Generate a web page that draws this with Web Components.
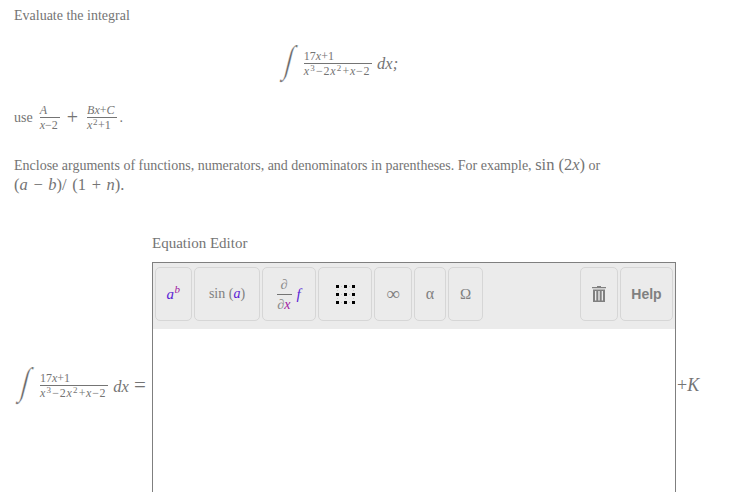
<!DOCTYPE html>
<html>
<head>
<meta charset="utf-8">
<style>
  html, body { margin: 0; height: 492px; overflow: hidden; background: #fff; }
  body { font: 14px/19px "Liberation Serif", serif; color: #747474; }
  i { font-style: italic; }
  sup { font-size: 9px; line-height: 0; vertical-align: 4px; margin: 0 .5px; }
  .a { color: #5b1fd6; }
  .b { color: #a020a0; }
</style>
</head>
<body>
<template id="frac-tpl">
  <style>
    :host { display: inline-flex; flex-direction: column; align-items: stretch; vertical-align: middle; font-size: var(--frac-size, 12px); line-height: var(--frac-line, 12px); margin: 0 var(--frac-gap, 2px); text-align: var(--frac-align, left); }
    .num { padding: 0 2px var(--frac-pad, 1px) 0; }
    .den { padding: var(--frac-pad, 1px) 2px 0 0; border-top: 1px solid #747474; white-space: nowrap; }
  </style>
  <div class="num"><slot name="num"></slot></div>
  <div class="den"><slot name="den"></slot></div>
</template>
<template id="int-tpl">
  <style>
    :host { display: inline-flex; align-items: center; white-space: nowrap; }
    sup { font-size: 9px; line-height: 0; vertical-align: 4px; margin: 0 .5px; }
    .sign { font: 38px/38px "Liberation Serif", serif; width: 22px; margin: 0 1px; text-align: center; display: block; transform: translateY(-4px) skewX(-14deg) scaleX(.66); -webkit-text-stroke: .45px #fff; color: #666; }
    .tail { font-size: 16.500px; margin-left: 3px; font-style: italic; }
  </style>
  <span class="sign">∫</span>
  <x-frac>
    <span slot="num">17<i>x</i>+1</span>
    <span slot="den" style="letter-spacing:.7px"><i>x</i><sup>3</sup>−2<i>x</i><sup>2</sup>+<i>x</i>−2</span>
  </x-frac>
  <span class="tail"><slot></slot></span>
</template>
<template id="btn-tpl">
  <style>
    :host { display: flex; align-items: center; justify-content: center; box-sizing: border-box; height: 54px; flex: none; background: #ebebeb; border: 1px solid #d6d6d6; border-radius: 5px; color: #808080; font: 14px "Liberation Serif", serif; }
  </style>
  <slot></slot>
</template>
<template id="editor-tpl">
  <style>
    :host { display: block; box-sizing: border-box; width: 524px; height: 246px; border: 1px solid #7f7f7f; background: #fff; flex: none; }
    .bar { display: flex; gap: 2px; height: 66px; box-sizing: border-box; padding: 4px 2px 0 2px; background: #ebebeb; }
    .spacer { flex: 1; }
  </style>
  <div class="bar">
    <slot name="left"></slot>
    <div class="spacer"></div>
    <slot name="right"></slot>
  </div>
</template>
<template id="q-tpl">
  <style>
    :host { display: block; padding: 6px 14px 0; }
    .center { display: flex; justify-content: center; padding-right: 60px; height: 44px; margin-top: 16px; align-items: center; }
    .use { margin-top: 17px; height: 30px; display: flex; align-items: center; }
    .note { margin-top: 23px; line-height: 19px; white-space: nowrap; }
    .title { margin: 39px 0 0 138px; font-size: 15px; line-height: 19px; }
  </style>
  <slot name="intro"></slot>
  <div class="center"><slot name="main"></slot></div>
  <div class="use"><slot name="use"></slot></div>
  <div class="note"><slot name="note"></slot></div>
  <div class="title"><slot name="title"></slot></div>
</template>
<template id="row-tpl">
  <style>
    :host { display: flex; align-items: center; margin-top: 9px; height: 246px; }
    .left { width: 152px; box-sizing: border-box; padding-left: 14px; flex: none; white-space: nowrap; }
    .right { font-size: 18px; padding-left: 1px; white-space: nowrap; }
  </style>
  <div class="left"><slot name="left"></slot></div>
  <slot></slot>
  <div class="right"><slot name="right"></slot></div>
</template>

<script>
  function makeElement(name, tplId) {
    customElements.define(name, class extends HTMLElement {
      constructor() {
        super();
        this.attachShadow({mode: 'open'}).appendChild(document.getElementById(tplId).content.cloneNode(true));
      }
    });
  }
  makeElement('x-frac', 'frac-tpl');
  makeElement('x-integral', 'int-tpl');
  makeElement('x-tool', 'btn-tpl');
  makeElement('x-editor', 'editor-tpl');
  makeElement('x-question', 'q-tpl');
  makeElement('x-answer-row', 'row-tpl');
</script>

<x-question>
  <span slot="intro">Evaluate the integral</span>
  <x-integral slot="main">dx;</x-integral>
  <span slot="use" style="display:inline-flex;align-items:center">
    <span style="margin-right:5px">use</span>
    <x-frac><i slot="num">A</i><span slot="den"><i>x</i>−2</span></x-frac>
    <span style="font-size:20px;margin:0 7px 0 5px">+</span>
    <x-frac><span slot="num"><i>Bx</i>+<i>C</i></span><span slot="den"><i>x</i><sup>2</sup>+1</span></x-frac>
    <span style="margin-left:1px">.</span>
  </span>
  <span slot="note">Enclose arguments of functions, numerators, and denominators in parentheses. For example, <span style="font-size:16.500px">sin (2<i>x</i>)</span> or<br><span style="font-size:16.500px;word-spacing:1.500px">(<i>a</i> − <i>b</i>)/ (1 + <i>n</i>).</span></span>
  <span slot="title">Equation Editor</span>
</x-question>

<x-answer-row>
  <span slot="left"><x-integral>dx <span style="font:21px/1 'Liberation Serif',serif;margin-left:1px">=</span></x-integral></span>
  <x-editor>
    <x-tool slot="left" style="width:37px"><span style="font-size:15px"><i class="a">a</i><sup class="b" style="font-style:italic;font-size:11px;vertical-align:6px">b</sup></span></x-tool>
    <x-tool slot="left" style="width:66px"><span>sin (<i class="a">a</i>)</span></x-tool>
    <x-tool slot="left" style="width:54px">
      <span style="display:inline-flex;align-items:center">
        <x-frac style="--frac-size:14px;--frac-line:15px;--frac-gap:0;--frac-align:center;--frac-pad:2px"><span slot="num" style="color:#8c8c8c">∂</span><span slot="den"><span style="color:#8c8c8c">∂</span><i class="b">x</i></span></x-frac>
        <i class="a" style="margin-left:4px;font-size:15px">f</i>
      </span>
    </x-tool>
    <x-tool slot="left" style="width:54px">
      <svg width="19" height="19" viewBox="0 0 19 19" fill="#000">
        <path d="M0 0h3v3H0zM8 0h3v3H8zM16 0h3v3h-3zM0 8h3v3H0zM8 8h3v3H8zM16 8h3v3h-3zM0 16h3v3H0zM8 16h3v3H8zM16 16h3v3h-3z"/>
        <path d="M5 1h1v1H5zM13 1h1v1h-1zM5 9h1v1H5zM13 9h1v1h-1zM5 17h1v1H5zM13 17h1v1h-1zM1 5h1v1H1zM9 5h1v1H9zM17 5h1v1h-1zM1 13h1v1H1zM9 13h1v1H9zM17 13h1v1h-1z" fill="#ccc"/>
      </svg>
    </x-tool>
    <x-tool slot="left" style="width:38px"><span style="font-size:19px">∞</span></x-tool>
    <x-tool slot="left" style="width:32px"><span style="font-size:16px">α</span></x-tool>
    <x-tool slot="left" style="width:35px"><span style="font-size:15px">Ω</span></x-tool>
    <x-tool slot="right" style="width:38px">
      <svg width="14" height="16" viewBox="0 0 14 16" fill="#808080">
        <path d="M5 0h4v1h5v1.300H0V1h5z"/>
        <path d="M1 3.500h12V16H1zM3 5v9.500h1.300V5zM6.300 5v9.500h1.400V5zM9.700 5v9.500H11V5z" fill-rule="evenodd"/>
      </svg>
    </x-tool>
    <x-tool slot="right" style="width:53px"><span style="font:bold 14px 'Liberation Sans',sans-serif">Help</span></x-tool>
  </x-editor>
  <span slot="right">+<i>K</i></span>
</x-answer-row>
</body>
</html>
